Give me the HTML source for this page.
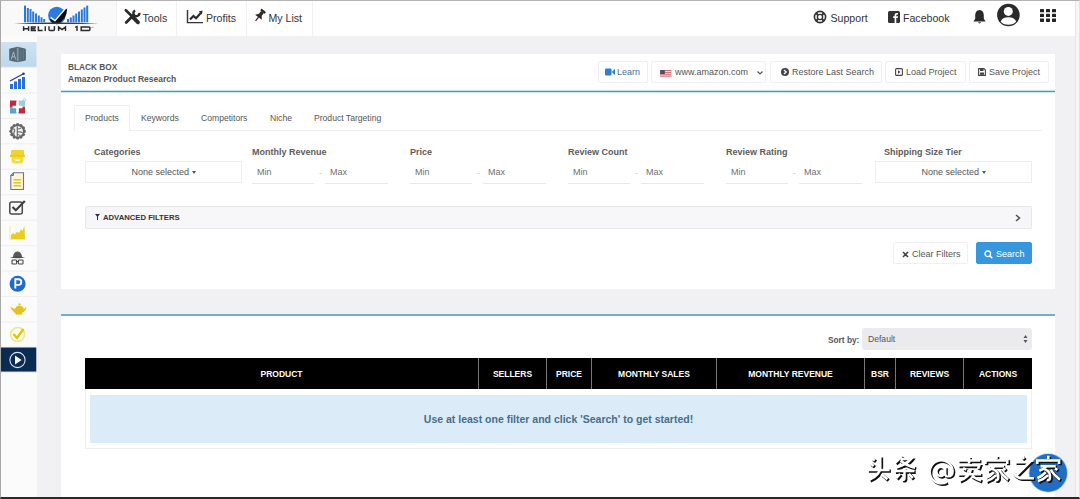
<!DOCTYPE html>
<html><head><meta charset="utf-8">
<style>
*{box-sizing:border-box;margin:0;padding:0}
html,body{width:1080px;height:499px;overflow:hidden;background:#f1f1f3;font-family:"Liberation Sans",sans-serif;color:#555;position:relative}
.abs{position:absolute}
#frame{position:absolute;left:0;top:0;width:1080px;height:499px;border-top:1px solid #b4b4b4;border-left:1px solid #a8a8a8;border-bottom:2px solid #2a2a2a;border-right:1px solid #e2e2e4;pointer-events:none;z-index:50}
#nav{position:absolute;left:0;top:0;width:1080px;height:36px;background:#fff}
#logoarea{position:absolute;left:0;top:0;width:116px;height:36px;background:#f9f9fa}
.navitem{position:absolute;top:0;height:36px;border-left:1px solid #f0f0f0;font-size:10.6px;color:#333;line-height:36px;white-space:nowrap}
.navtxt{position:absolute;font-size:10.6px;color:#333;white-space:nowrap;top:12px;line-height:12px}
#side{position:absolute;left:0;top:36px;width:37px;height:463px;background:#fbfbfc}
.sitem{position:absolute;left:1px;width:36px;height:25px;border-bottom:1px solid #f0f0f2}
.card{position:absolute;background:#fff}
.btn{position:absolute;height:22px;border:1px solid #efefef;border-radius:2px;background:#fff;font-size:9px;color:#555;line-height:20px;white-space:nowrap}
.lbl{position:absolute;font-size:9px;font-weight:bold;color:#5c5c5c;white-space:nowrap;line-height:10px}
.inp{position:absolute;height:22px;border-bottom:1px solid #e8e8e8;font-size:9px;color:#707070;line-height:20px;padding-left:5px}
.th{position:absolute;top:0;height:31px;border-left:1px solid #777;color:#fff;font-size:8.5px;font-weight:bold;line-height:32.5px;text-align:center}
</style></head><body>
<div id="nav">
  <div id="logoarea"></div>
  <!-- logo -->
  <svg class="abs" style="left:0;top:0" width="110" height="36" viewBox="0 0 110 36">
    <g fill="#2b78dc"><rect x="24.0" y="5.6" width="2" height="16.7"/><rect x="26.8" y="8.0" width="2" height="14.3"/><rect x="29.5" y="9.0" width="2" height="13.3"/><rect x="32.2" y="11.5" width="2" height="10.8"/><rect x="35.0" y="13.5" width="2" height="8.8"/><rect x="37.8" y="15.5" width="2" height="6.8"/><rect x="40.5" y="17.3" width="2" height="5.0"/><rect x="43.2" y="19.0" width="2" height="3.3"/><rect x="67.0" y="19.0" width="2" height="3.3"/><rect x="69.8" y="17.5" width="2" height="4.8"/><rect x="72.5" y="15.5" width="2" height="6.8"/><rect x="75.2" y="13.5" width="2" height="8.8"/><rect x="78.0" y="11.5" width="2" height="10.8"/><rect x="80.8" y="9.5" width="2" height="12.8"/><rect x="83.5" y="7.5" width="2" height="14.8"/><rect x="86.2" y="5.6" width="2" height="16.7"/></g>
    <circle cx="56.8" cy="15.5" r="8.7" fill="#2c7be5"/>
    <path d="M49.2 18.3 L54.9 21.6 L63.8 10.6 L67.2 8.6 Q66.8 20.5 57 24.2 Q51.5 24.2 49.2 18.3 Z" fill="#0e0e12"/>
    <path d="M50.6 17.4 L55 20.6 L64.3 10" stroke="#fff" stroke-width="1.3" fill="none"/>
    <path d="M13.7 23.4 Q56 21.6 98.9 23.4 Q56 24.6 13.7 23.4 Z" fill="#3a3a40"/>
    <g stroke="#2a2a2e" stroke-width="1.45" fill="none">
      <path d="M23.6 26.3 V31.1 M28.6 26.3 V31.1 M23.6 28.7 H28.6"/>
      <path d="M36 26.9 H31.4 V30.5 H36 M31.4 28.7 H35.4"/>
      <path d="M38.4 26.3 V30.5 H42.6"/>
      <path d="M45.3 26.3 V31.1"/>
      <path d="M49 26.3 V29.6 Q49 30.5 50 30.5 H53.5 Q54.4 30.5 54.4 29.6 V26.3"/>
      <path d="M58.6 31.1 V26.9 L62.1 29.6 L65.5 26.9 V31.1"/>
      <path d="M75.2 27.3 L77 26.5 V31.1"/>
      <path d="M81.2 26.9 H89 Q89.9 26.9 89.9 27.8 V29.6 Q89.9 30.5 89 30.5 H81.2 Z"/>
    </g>
    <text x="90.5" y="27.5" font-family="Liberation Sans" font-size="2.2" fill="#555">TM</text>
  </svg>
  <div class="navitem" style="left:116px;width:60px"></div>
  <div class="navitem" style="left:176px;width:70px"></div>
  <div class="navitem" style="left:246px;width:67px;border-right:1px solid #f0f0f0"></div>
  <!-- tools icon -->
  <svg class="abs" style="left:120px;top:5px" width="25" height="25" viewBox="0 0 25 25">
    <g stroke="#2a2a2a" fill="none" stroke-linecap="round">
      <path d="M5.8 5.2 L11.5 10.8" stroke-width="2.6"/>
      <path d="M12.8 12.2 L18 17.3" stroke-width="3.8"/>
      <path d="M6.2 17.4 L13.6 10" stroke-width="2.8"/>
      <path d="M15.13 5.48 A3.0 3.0 0 1 0 19.39 7.94" stroke-width="2.3" stroke-linecap="butt"/>
    </g>
  </svg>
  <div class="navtxt" style="left:142.5px">Tools</div>
  <svg class="abs" style="left:180px;top:5px" width="25" height="25" viewBox="0 0 25 25">
    <path d="M7.5 5 V17.6 H23" stroke="#333" stroke-width="1.4" fill="none"/>
    <path d="M10 14.6 L13.5 11 L16 13.2 L20.8 8" stroke="#2a2a2a" stroke-width="2.1" fill="none"/>
    <path d="M18.6 6.4 L22.6 5.6 L22 9.6 Z" fill="#2a2a2a"/>
  </svg>
  <div class="navtxt" style="left:206px">Profits</div>
  <svg class="abs" style="left:250px;top:5px" width="25" height="25" viewBox="0 0 25 25">
    <g transform="translate(13.6 5.6) rotate(38)" fill="#2a2a2a">
      <rect x="-2.8" y="-0.4" width="5.6" height="2.4" rx=".6"/>
      <rect x="-1.7" y="1.8" width="3.4" height="3.6"/>
      <path d="M-1.7 5.2 L-4.2 8.4 H4.2 L1.7 5.2 Z"/>
      <rect x="-0.6" y="8.2" width="1.2" height="4.8"/>
    </g>
  </svg>
  <div class="navtxt" style="left:268.5px">My List</div>
  <!-- right nav -->
  <svg class="abs" style="left:813px;top:10px" width="14" height="14" viewBox="0 0 14 14">
    <circle cx="7" cy="7" r="5.6" stroke="#333" stroke-width="1.6" fill="none"/>
    <circle cx="7" cy="7" r="2.6" stroke="#333" stroke-width="1.4" fill="none"/>
    <path d="M3 3 L5 5 M11 3 L9 5 M3 11 L5 9 M11 11 L9 9" stroke="#333" stroke-width="2"/>
  </svg>
  <div class="navtxt" style="left:830.5px">Support</div>
  <svg class="abs" style="left:888px;top:11px" width="12" height="12" viewBox="0 0 12 12">
    <rect x="0" y="0" width="12" height="12" rx="1.5" fill="#333"/>
    <path d="M8.3 12 V7 H9.8 L10 5.3 H8.3 V4.2 Q8.3 3.5 9 3.5 H10 V2 H8.6 Q6.6 2 6.6 4 V5.3 H5.2 V7 H6.6 V12 Z" fill="#fff"/>
  </svg>
  <div class="navtxt" style="left:903px">Facebook</div>
  <svg class="abs" style="left:972px;top:9px" width="15" height="16" viewBox="0 0 15 16">
    <path d="M7.5 1 Q11.8 1.4 11.8 6.5 V9.8 L13.6 12.6 H1.4 L3.2 9.8 V6.5 Q3.2 1.4 7.5 1 Z" fill="#2a2a2a"/>
    <path d="M5.8 13.3 Q7.5 15.6 9.2 13.3 Z" fill="#2a2a2a"/>
  </svg>
  <svg class="abs" style="left:996px;top:3px" width="25" height="25" viewBox="0 0 25 25">
    <circle cx="12.4" cy="12" r="11.3" fill="#2a2a2a"/>
    <circle cx="12.3" cy="8.4" r="4.5" fill="#fff"/>
    <path d="M4.6 18.6 Q6.3 14.3 12.4 14.3 Q18.5 14.3 20.2 18.6 Q17.6 21.8 12.4 21.8 Q7.2 21.8 4.6 18.6 Z" fill="#fff"/>
  </svg>
  <svg class="abs" style="left:1040px;top:9px" width="16" height="13" viewBox="0 0 16 13">
    <g fill="#222">
      <rect x="0" y="0" width="4" height="3.3" rx=".6"/><rect x="6" y="0" width="4" height="3.3" rx=".6"/><rect x="12" y="0" width="4" height="3.3" rx=".6"/>
      <rect x="0" y="4.8" width="4" height="3.3" rx=".6"/><rect x="6" y="4.8" width="4" height="3.3" rx=".6"/><rect x="12" y="4.8" width="4" height="3.3" rx=".6"/>
      <rect x="0" y="9.6" width="4" height="3.3" rx=".6"/><rect x="6" y="9.6" width="4" height="3.3" rx=".6"/><rect x="12" y="9.6" width="4" height="3.3" rx=".6"/>
    </g>
  </svg>
</div>

<div id="side"></div>
<svg class="abs" style="left:0;top:0;z-index:2" width="37" height="499" viewBox="0 0 37 499">
  <g fill="none" stroke="#eeeef1" stroke-width="1">
    <path d="M1 67.5 H37 M1 92.9 H37 M1 118.4 H37 M1 143.8 H37 M1 169.3 H37 M1 194.8 H37 M1 220.2 H37 M1 245.7 H37 M1 271.1 H37 M1 296.6 H37 M1 322 H37 M1 347 H37 M1 372.5 H37"/>
  </g>
  <defs><linearGradient id="selg" x1="0" y1="0" x2="0" y2="1"><stop offset="0" stop-color="#cfe3f1"/><stop offset="1" stop-color="#bcd7ec"/></linearGradient></defs><rect x="1" y="42" width="35.6" height="24.8" fill="url(#selg)"/>
  <!-- 1 cube -->
  <path d="M9.2 49.6 Q9.2 48.8 10 48.5 L17.5 46.8 L25 48.5 Q25.9 48.8 25.9 49.6 V59.6 Q25.9 60.4 25 60.7 L17.5 62.2 L10 60.7 Q9.2 60.4 9.2 59.6 Z" fill="#546977"/>
  <rect x="16.8" y="47.6" width="1.8" height="14" fill="#8599a6"/>
  <path d="M11.2 59.5 L13.5 51.8 L15.6 59.5 M12 56.8 H15" stroke="#a3b5c0" stroke-width="1" fill="none"/>
  <path d="M20.8 50 V60 M23.4 49.6 V59.8" stroke="#6c7f8b" stroke-width=".8"/>
  <!-- 2 chart -->
  <g fill="#2a6fd8"><rect x="10" y="84" width="3" height="5"/><rect x="14" y="81.5" width="3" height="7.5"/><rect x="18" y="79" width="3" height="10"/><rect x="22" y="77" width="3" height="12"/></g>
  <path d="M10 81 L23 74" stroke="#1c3f80" stroke-width="1.2"/><circle cx="23.5" cy="73.8" r="1.3" fill="#1c3f80"/>
  <!-- 3 red/blue square -->
  <rect x="10" y="100.5" width="6.5" height="6.5" fill="#c12a3c"/><rect x="18.5" y="100.5" width="6.5" height="6.5" fill="#9fcbe0"/>
  <rect x="10" y="107" width="6.5" height="6.5" fill="#5aa6c8"/><rect x="18.5" y="107" width="6.5" height="6.5" fill="#c12a3c"/>
  <path d="M17.5 102 V112 M12.5 107 H22.5" stroke="#fff" stroke-width="2.4"/>
  <circle cx="24.5" cy="100" r="1.4" fill="none" stroke="#8cc" stroke-width=".6"/>
  <!-- 4 gear -->
  <g fill="#676767"><circle cx="24.20" cy="131.30" r="1.7"/><circle cx="23.32" cy="134.60" r="1.7"/><circle cx="20.90" cy="137.02" r="1.7"/><circle cx="17.60" cy="137.90" r="1.7"/><circle cx="14.30" cy="137.02" r="1.7"/><circle cx="11.88" cy="134.60" r="1.7"/><circle cx="11.00" cy="131.30" r="1.7"/><circle cx="11.88" cy="128.00" r="1.7"/><circle cx="14.30" cy="125.58" r="1.7"/><circle cx="17.60" cy="124.70" r="1.7"/><circle cx="20.90" cy="125.58" r="1.7"/><circle cx="23.32" cy="128.00" r="1.7"/><circle cx="17.6" cy="131.3" r="7"/></g>
  <circle cx="17.6" cy="131.3" r="5.3" fill="#f4f4f4"/>
  <path d="M17.3 126.3 V136.5 M17.3 129 Q20 129 21 127.8 M17.3 132 Q20.5 131.5 22.5 132.5 M17.3 134.5 Q19.5 134.5 20.5 136 M13.5 128.5 Q15.5 130 14 132.5 Q13 134.5 15 136" stroke="#6e6e6e" stroke-width="1.2" fill="none"/>
  <!-- 5 yellow face -->
  <path d="M11 151 Q11 150 12 150 H23 Q24 150 24 151 V155 H11 Z" fill="#f0d42a"/>
  <rect x="10" y="155" width="15" height="2" fill="#e8cc20"/>
  <path d="M11.5 157 H23.5 V160 Q23.5 163.6 20 163.6 H15 Q11.5 163.6 11.5 160 Z" fill="#f2da40"/>
  <path d="M14 159.5 Q17.5 163 21 159.5 Z" fill="#fff"/>
  <!-- 6 document -->
  <path d="M13.5 172.8 H23.5 V189.5 H10.8 V175.5 Z" fill="#fbf6d8" stroke="#6c7488" stroke-width="1.1"/>
  <path d="M10.8 175.5 H13.5 V172.8" fill="none" stroke="#6c7488" stroke-width="1"/>
  <g fill="#e0c630"><rect x="13.5" y="179" width="7.5" height="1.6"/><rect x="13.5" y="182" width="7.5" height="1.6"/><rect x="13.5" y="185" width="7.5" height="1.6"/></g>
  <!-- 7 checkbox -->
  <rect x="9.8" y="202" width="12.5" height="12" rx="2" fill="none" stroke="#4a4a4a" stroke-width="1.5"/>
  <path d="M12.5 207 L15.8 210.2 L24.8 201" stroke="#3f3f3f" stroke-width="2.2" fill="none"/>
  <!-- 8 yellow area -->
  <path d="M10 226 V239.6 H25.5" stroke="#f2e59a" stroke-width=".8" fill="none"/>
  <path d="M11 239 V235 L13 233 L15 234.5 L17 231.5 L19 233 L21 229 L22.5 231 L24.5 225.5 L25 239 Z" fill="#e8cf1e"/>
  <!-- 9 spy -->
  <path d="M13 257 Q13.5 251.5 17.5 251.5 Q21.5 251.5 22 257 Z" fill="#5a5a5a"/>
  <path d="M9.8 257.5 Q17.5 255.5 25.2 257.5 Q17.5 259 9.8 257.5 Z" fill="#4a4a4a"/>
  <rect x="12" y="260" width="4.6" height="4" rx=".8" fill="none" stroke="#444" stroke-width="1.1"/>
  <rect x="18.4" y="260" width="4.6" height="4" rx=".8" fill="none" stroke="#444" stroke-width="1.1"/>
  <path d="M16.6 261.5 H18.4" stroke="#444" stroke-width="1"/>
  <!-- 10 P -->
  <circle cx="17.6" cy="283.8" r="8" fill="#1d6bd0"/>
  <path d="M15.3 288.5 V279.3 H18.6 Q21.3 279.3 21.3 282.1 Q21.3 284.9 18.6 284.9 H15.3" fill="none" stroke="#fff" stroke-width="1.9"/>
  <!-- 11 lamp -->
  <path d="M10 306.5 Q13 308 15 309 Q16 305.5 19.5 305.5 Q22.5 305.5 24 309 L26.5 306.5 Q26 311 22 313 H15 Q12 311 10 306.5 Z" fill="#e6c21e"/>
  <rect x="15.5" y="313" width="6.5" height="1.6" fill="#e6c21e"/>
  <circle cx="19.5" cy="304.3" r="1.1" fill="#e6c21e"/>
  <!-- 12 check circle -->
  <circle cx="17.6" cy="334.6" r="7" fill="#fdfbe4" stroke="#ece88a" stroke-width="1.5"/>
  <path d="M13.5 334 L17 338 L23.5 329" stroke="#d9c51a" stroke-width="2.3" fill="none"/>
  <!-- 13 navy play -->
  <rect x="1" y="347.5" width="35.3" height="24.1" fill="#0c2b52"/>
  <circle cx="17.5" cy="360" r="7.6" fill="none" stroke="#d6e4f0" stroke-width="1.1"/>
  <path d="M15 355.6 L21.6 360 L15 364.4 Z" fill="#fff"/>
</svg>

<!-- CARD 1 -->
<div class="card" style="left:61px;top:54px;width:994px;height:235px"></div>
<div class="abs" style="left:61px;top:90px;width:994px;height:1px;background:#c4e2e8"></div><div class="abs" style="left:61px;top:91px;width:994px;height:1px;background:#5f979e"></div><div class="abs" style="left:61px;top:92px;width:994px;height:1px;background:#cfe9ee"></div>
<div class="lbl" style="left:68px;top:62px;font-size:8.3px;color:#555">BLACK BOX</div>
<div class="lbl" style="left:68px;top:74px;font-size:8.5px;color:#555">Amazon Product Research</div>

<div class="btn" style="left:598px;top:61px;width:50px;color:#4a6f90">
  <svg class="abs" style="left:6px;top:6px" width="10" height="8" viewBox="0 0 10 8"><rect x="0" y="0.5" width="6.5" height="7" rx="1" fill="#2f80c8"/><path d="M6.5 4 L10 1 V7 Z" fill="#2f80c8"/></svg>
  <span class="abs" style="left:18px;top:0">Learn</span>
</div>
<div class="btn" style="left:651px;top:61px;width:115px">
  <svg class="abs" style="left:8px;top:7.5px" width="11.5" height="7.5" viewBox="0 0 12 8"><rect width="12" height="8" fill="#d46a78"/><rect y="1.15" width="12" height="1.1" fill="#f2d8dc"/><rect y="3.45" width="12" height="1.1" fill="#f2d8dc"/><rect y="5.75" width="12" height="1.1" fill="#f2d8dc"/><rect width="5" height="4.3" fill="#4a4f6a"/></svg>
  <span class="abs" style="left:23px;top:0">www.amazon.com</span>
  <svg class="abs" style="left:105px;top:9px" width="6" height="4" viewBox="0 0 6 4"><path d="M0.5 0.5 L3 3 L5.5 0.5" stroke="#555" stroke-width="1.2" fill="none"/></svg>
</div>
<div class="btn" style="left:770px;top:61px;width:112px">
  <svg class="abs" style="left:10px;top:6px" width="8" height="8" viewBox="0 0 8 8"><circle cx="4" cy="4" r="4" fill="#444"/><path d="M3 2 L5.2 4 L3 6" stroke="#fff" stroke-width="1.3" fill="none"/></svg>
  <span class="abs" style="left:21px;top:0">Restore Last Search</span>
</div>
<div class="btn" style="left:885px;top:61px;width:81px">
  <svg class="abs" style="left:9px;top:6px" width="8" height="8" viewBox="0 0 8 8"><rect x="0.6" y="0.6" width="6.8" height="6.8" rx="1" stroke="#444" stroke-width="1.1" fill="none"/><path d="M3 2.2 L5.5 4 L3 5.8 Z" fill="#444"/></svg>
  <span class="abs" style="left:20px;top:0">Load Project</span>
</div>
<div class="btn" style="left:969px;top:61px;width:80px">
  <svg class="abs" style="left:8px;top:6px" width="8" height="8" viewBox="0 0 8 8"><path d="M0.6 0.6 H6 L7.4 2 V7.4 H0.6 Z" stroke="#444" stroke-width="1.1" fill="none"/><rect x="2" y="1" width="3.5" height="2" fill="#444"/><rect x="2" y="4.5" width="4" height="2.3" fill="#444"/></svg>
  <span class="abs" style="left:19px;top:0">Save Project</span>
</div>

<!-- tabs -->
<div class="abs" style="left:74px;top:130px;width:968px;height:1px;background:#eeeeee"></div>
<div class="abs" style="left:74px;top:105px;width:56px;height:26px;border:1px solid #eeeeee;border-bottom:none;background:#fff;border-radius:2px 2px 0 0"></div>
<div class="abs" style="left:85px;top:113px;font-size:8.6px;color:#555;white-space:nowrap">Products</div>
<div class="abs" style="left:141px;top:113px;font-size:8.6px;color:#555;white-space:nowrap">Keywords</div>
<div class="abs" style="left:201px;top:113px;font-size:8.6px;color:#555;white-space:nowrap">Competitors</div>
<div class="abs" style="left:270px;top:113px;font-size:8.6px;color:#555;white-space:nowrap">Niche</div>
<div class="abs" style="left:314px;top:113px;font-size:8.6px;color:#555;white-space:nowrap">Product Targeting</div>

<!-- filters -->
<div class="lbl" style="left:94px;top:147px">Categories</div>
<div class="lbl" style="left:252px;top:147px">Monthly Revenue</div>
<div class="lbl" style="left:410px;top:147px">Price</div>
<div class="lbl" style="left:568px;top:147px">Review Count</div>
<div class="lbl" style="left:726px;top:147px">Review Rating</div>
<div class="lbl" style="left:884px;top:147px">Shipping Size Tier</div>

<div class="abs" style="left:85px;top:161px;width:157px;height:22px;border:1px solid #eeeeee;font-size:9px;color:#555;text-align:center;line-height:20px">None selected <span style="display:inline-block;width:0;height:0;border-left:2.5px solid transparent;border-right:2.5px solid transparent;border-top:3px solid #555;vertical-align:middle"></span></div>
<div class="abs" style="left:875px;top:161px;width:157px;height:22px;border:1px solid #eeeeee;font-size:9px;color:#555;text-align:center;line-height:20px">None selected <span style="display:inline-block;width:0;height:0;border-left:2.5px solid transparent;border-right:2.5px solid transparent;border-top:3px solid #555;vertical-align:middle"></span></div>

<div class="inp" style="left:252px;top:162px;width:62px">Min</div>
<div class="abs" style="left:319px;top:169px;font-size:9px;color:#c8c8c8;line-height:9px">-</div>
<div class="inp" style="left:325px;top:162px;width:63px">Max</div>
<div class="inp" style="left:410px;top:162px;width:62px">Min</div>
<div class="abs" style="left:477px;top:169px;font-size:9px;color:#c8c8c8;line-height:9px">-</div>
<div class="inp" style="left:483px;top:162px;width:63px">Max</div>
<div class="inp" style="left:568px;top:162px;width:62px">Min</div>
<div class="abs" style="left:635px;top:169px;font-size:9px;color:#c8c8c8;line-height:9px">-</div>
<div class="inp" style="left:641px;top:162px;width:63px">Max</div>
<div class="inp" style="left:726px;top:162px;width:62px">Min</div>
<div class="abs" style="left:793px;top:169px;font-size:9px;color:#c8c8c8;line-height:9px">-</div>
<div class="inp" style="left:799px;top:162px;width:63px">Max</div>

<!-- advanced -->
<div class="abs" style="left:85px;top:206px;width:947px;height:23px;background:#f7f7f9;border:1px solid #e8e8ea;border-radius:2px"></div>
<svg class="abs" style="left:95px;top:214px" width="5" height="6" viewBox="0 0 5 6"><path d="M0 0 H5 L3 2.5 V6 H2 V2.5 Z" fill="#333"/></svg>
<div class="abs" style="left:103px;top:213px;font-size:7.7px;font-weight:bold;color:#333;white-space:nowrap;line-height:10px">ADVANCED FILTERS</div>
<svg class="abs" style="left:1015px;top:214px" width="6" height="8" viewBox="0 0 6 8"><path d="M1 1 L4.5 4 L1 7" stroke="#555" stroke-width="1.6" fill="none"/></svg>

<div class="btn" style="left:893px;top:242px;width:75px;height:22px;border-color:#f0f0f0">
  <svg class="abs" style="left:8px;top:7.5px" width="7" height="7" viewBox="0 0 7 7"><path d="M1 1 L6 6 M6 1 L1 6" stroke="#444" stroke-width="1.6"/></svg>
  <span class="abs" style="left:18px;top:1px">Clear Filters</span>
</div>
<div class="btn" style="left:976px;top:242px;width:56px;height:22px;background:#3797dc;border-color:#3797dc;color:#fff">
  <svg class="abs" style="left:7px;top:6.5px" width="9" height="9" viewBox="0 0 9 9"><circle cx="3.8" cy="3.8" r="2.8" stroke="#fff" stroke-width="1.3" fill="none"/><path d="M5.8 5.8 L8.3 8.3" stroke="#fff" stroke-width="1.5"/></svg>
  <span class="abs" style="left:19px;top:1px">Search</span>
</div>

<!-- CARD 2 -->
<div class="card" style="left:61px;top:314px;width:994px;height:185px"></div>
<div class="abs" style="left:61px;top:314px;width:994px;height:2px;background:#7aa8d8"></div>
<div class="abs" style="left:828px;top:335px;font-size:8.3px;font-weight:bold;color:#555;white-space:nowrap">Sort by:</div>
<div class="abs" style="left:862px;top:328px;width:170px;height:22px;background:#ebebed;border-radius:3px;font-size:8.6px;color:#555;line-height:22px;padding-left:6px">Default
  <svg class="abs" style="left:161px;top:6px" width="5" height="10" viewBox="0 0 5 10"><path d="M0.5 4 L2.5 1 L4.5 4 Z M0.5 6 L2.5 9 L4.5 6 Z" fill="#555"/></svg>
</div>

<div class="abs" style="left:85px;top:358px;width:947px;height:31px;background:#000">
  <div class="th" style="left:0;width:393px;border-left:none">PRODUCT</div>
  <div class="th" style="left:393px;width:68px">SELLERS</div>
  <div class="th" style="left:461px;width:45px">PRICE</div>
  <div class="th" style="left:506px;width:125px">MONTHLY SALES</div>
  <div class="th" style="left:631px;width:148px">MONTHLY REVENUE</div>
  <div class="th" style="left:779px;width:31px">BSR</div>
  <div class="th" style="left:810px;width:68px">REVIEWS</div>
  <div class="th" style="left:878px;width:69px">ACTIONS</div>
</div>
<div class="abs" style="left:85px;top:389px;width:947px;height:60px;border:1px solid #eeeeee;border-top:none"></div>
<div class="abs" style="left:90px;top:395px;width:937px;height:48px;background:#dbebf7;color:#466f8b;font-size:10.5px;font-weight:bold;text-align:center;line-height:48px;white-space:nowrap">Use at least one filter and click 'Search' to get started!</div>

<svg class="abs" style="left:0;top:0;z-index:40" width="1080" height="499" viewBox="0 0 1080 499">
  <circle cx="1048.2" cy="472.9" r="19.6" fill="#a9cdf0"/>
  <circle cx="1048.2" cy="472.9" r="18.8" fill="#1f6dc4"/>
  <g stroke="#111" stroke-width="2.9" fill="none" stroke-linecap="butt"><path transform="translate(866.70 455.80) scale(1.1)" d="M6 3.5 L8.5 5.5 M4.5 8 L7.5 10.5 M2 14 H22 M13.5 1.5 V12 Q13 19 3.5 23 M14.5 18 L20 22.5"/><path transform="translate(892.60 455.80) scale(1.1)" d="M9.5 1 Q7 5 3.5 7.5 M8.5 4 H18 Q14 9 4 12 M8.5 5.5 Q14 10.5 21.5 12 M3 15 H21 M12 12.5 V21.5 Q12 23.5 10 22.5 M8 17.5 L4.5 21.5 M16 17.5 L19.5 21.5"/><path transform="translate(956.70 455.80) scale(1.1)" d="M2.6 5.4 H22.5 M12.4 2 V8.5 M2.6 9.8 H21.8 L20.6 13 M7 12.4 L10 13.8 M10.8 14.4 L13.8 15.8 M2.4 17.9 H23.4 M14.2 13 Q13 20.5 3.8 23.8 M14.8 19.6 Q18.5 22 23.4 23.8"/><path transform="translate(982.60 455.80) scale(1.1)" d="M13.8 1.2 V4.2 M3.8 8.7 V5.4 H23.6 V8.7 M6.8 10.6 H20.6 M12.3 10.6 Q10 13 5.7 14.8 M9.2 13 Q14.8 14.5 15.3 18.5 V21.5 Q15 24 12.5 23 M11.5 16 Q8.5 19.5 4 21.5 M13.6 18.8 Q10 22.5 4.5 24.2 M16 14 Q19.5 19.5 24.4 22.8 M20 12.4 L22 14"/><path transform="translate(1011.05 455.80) scale(1.1)" d="M11 1.5 L13 4 M5 7 H18 Q12 13 5 20 M3.5 16.5 Q6 21 10 21.5 H22"/><path transform="translate(1034.40 455.80) scale(1.1)" d="M13.8 1.2 V4.2 M3.8 8.7 V5.4 H23.6 V8.7 M6.8 10.6 H20.6 M12.3 10.6 Q10 13 5.7 14.8 M9.2 13 Q14.8 14.5 15.3 18.5 V21.5 Q15 24 12.5 23 M11.5 16 Q8.5 19.5 4 21.5 M13.6 18.8 Q10 22.5 4.5 24.2 M16 14 Q19.5 19.5 24.4 22.8 M20 12.4 L22 14"/></g>
  <path transform="translate(929.5999999999999 459.8)" d="M17 8.5 V15.5 Q17 18 19.5 18 Q24.5 18 24.5 12.5 A11.5 11.5 0 1 0 18.5 23.5 M16.8 13 A4.3 4.6 0 1 1 8.2 13 A4.3 4.6 0 1 1 16.8 13" stroke="#111" stroke-width="2.5" fill="none"/>
  <g stroke="#fff" stroke-width="2.3" fill="none" stroke-linecap="butt"><path transform="translate(865.40 454.50) scale(1.1)" d="M6 3.5 L8.5 5.5 M4.5 8 L7.5 10.5 M2 14 H22 M13.5 1.5 V12 Q13 19 3.5 23 M14.5 18 L20 22.5"/><path transform="translate(891.30 454.50) scale(1.1)" d="M9.5 1 Q7 5 3.5 7.5 M8.5 4 H18 Q14 9 4 12 M8.5 5.5 Q14 10.5 21.5 12 M3 15 H21 M12 12.5 V21.5 Q12 23.5 10 22.5 M8 17.5 L4.5 21.5 M16 17.5 L19.5 21.5"/><path transform="translate(955.40 454.50) scale(1.1)" d="M2.6 5.4 H22.5 M12.4 2 V8.5 M2.6 9.8 H21.8 L20.6 13 M7 12.4 L10 13.8 M10.8 14.4 L13.8 15.8 M2.4 17.9 H23.4 M14.2 13 Q13 20.5 3.8 23.8 M14.8 19.6 Q18.5 22 23.4 23.8"/><path transform="translate(981.30 454.50) scale(1.1)" d="M13.8 1.2 V4.2 M3.8 8.7 V5.4 H23.6 V8.7 M6.8 10.6 H20.6 M12.3 10.6 Q10 13 5.7 14.8 M9.2 13 Q14.8 14.5 15.3 18.5 V21.5 Q15 24 12.5 23 M11.5 16 Q8.5 19.5 4 21.5 M13.6 18.8 Q10 22.5 4.5 24.2 M16 14 Q19.5 19.5 24.4 22.8 M20 12.4 L22 14"/><path transform="translate(1009.75 454.50) scale(1.1)" d="M11 1.5 L13 4 M5 7 H18 Q12 13 5 20 M3.5 16.5 Q6 21 10 21.5 H22"/><path transform="translate(1033.10 454.50) scale(1.1)" d="M13.8 1.2 V4.2 M3.8 8.7 V5.4 H23.6 V8.7 M6.8 10.6 H20.6 M12.3 10.6 Q10 13 5.7 14.8 M9.2 13 Q14.8 14.5 15.3 18.5 V21.5 Q15 24 12.5 23 M11.5 16 Q8.5 19.5 4 21.5 M13.6 18.8 Q10 22.5 4.5 24.2 M16 14 Q19.5 19.5 24.4 22.8 M20 12.4 L22 14"/></g>
  <path transform="translate(928.3 458.5)" d="M17 8.5 V15.5 Q17 18 19.5 18 Q24.5 18 24.5 12.5 A11.5 11.5 0 1 0 18.5 23.5 M16.8 13 A4.3 4.6 0 1 1 8.2 13 A4.3 4.6 0 1 1 16.8 13" stroke="#fff" stroke-width="2.2" fill="none"/>
</svg>
<div class="abs" style="left:1075px;top:0;width:5px;height:499px;background:#f6f6f7;border-left:1px solid #e6e6e8;z-index:45"></div>
<div id="frame"></div>
</body></html>
